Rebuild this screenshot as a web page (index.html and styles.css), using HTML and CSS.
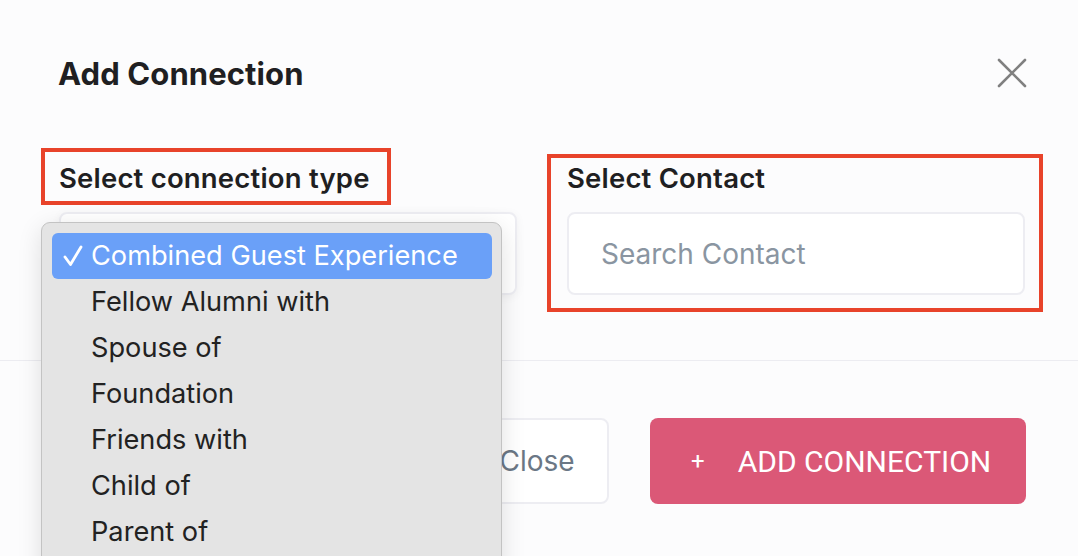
FILE: index.html
```html
<!DOCTYPE html>
<html lang="en">

<head>
	<meta charset="UTF-8">
	<meta name="viewport" content="width=device-width, initial-scale=1.0">
	<title>Add Connection</title>
	<link rel="stylesheet" href="styles.css">
</head>

<body>
	<div class="modal">
		<div class="modal-header">
			<h2 class="modal-title">Add Connection</h2>
			<button class="icon-close" aria-label="Close">
				<svg width="32" height="32" viewBox="0 0 32 32">
					<path d="M3 3 L29 29 M29 3 L3 29" stroke="#808080" stroke-width="2.6" stroke-linecap="round" fill="none"/>
				</svg>
			</button>
		</div>

		<div class="modal-body">
			<div class="field">
				<label class="field-label">Select connection type</label>
				<div class="select-box"></div>
			</div>
			<div class="field">
				<label class="field-label">Select Contact</label>
				<input class="input-box" type="text" placeholder="Search Contact">
			</div>
		</div>

		<div class="modal-footer">
			<button class="btn btn-light">Close</button>
			<button class="btn btn-primary"><span class="plus">+</span>ADD CONNECTION</button>
		</div>
	</div>

	<!-- annotation boxes -->
	<div class="mark mark-type"></div>
	<div class="mark mark-contact"></div>

	<!-- native select popup -->
	<ul class="dropdown">
		<li class="option selected">
			<svg class="check" width="20" height="22" viewBox="0 0 20 22">
				<path d="M2 12 L7.5 19.5 L18 2" stroke="#fff" stroke-width="2.8" stroke-linecap="round" stroke-linejoin="round" fill="none"/>
			</svg>Combined Guest Experience</li>
		<li class="option">Fellow Alumni with</li>
		<li class="option">Spouse of</li>
		<li class="option">Foundation</li>
		<li class="option">Friends with</li>
		<li class="option">Child of</li>
		<li class="option">Parent of</li>
	</ul>
</body>

</html>
```

FILE: styles.css
```css
/* base */
html, body {
	margin: 0;
	padding: 0;
	height: 100%;
	overflow: hidden;
}

body {
	font-family: 'Inter', 'Liberation Sans', sans-serif;
	background: #fcfcfd;
	color: #1f1f22;
	position: relative;
}

.modal {
	width: 100%;
}

/* header */
.modal-header {
	height: 146px;
	display: flex;
	align-items: center;
	justify-content: space-between;
	padding: 0 50px 0 58px;
	box-sizing: border-box;
}

.modal-title {
	margin: 0;
	font-size: 31px;
	font-weight: 700;
	letter-spacing: 0.1px;
}

.icon-close {
	border: none;
	background: none;
	padding: 0;
	width: 32px;
	height: 32px;
	cursor: pointer;
}

/* body */
.modal-body {
	display: flex;
	gap: 50px;
	padding: 16px 53px 65px 59px;
	border-bottom: 1px solid #ececf1;
}

.field {
	flex: 1;
	display: flex;
	flex-direction: column;
}

.field-label {
	height: 32px;
	line-height: 32px;
	font-size: 27.5px;
	font-weight: 600;
	letter-spacing: 0.2px;
	margin-bottom: 18px;
}

.select-box,
.input-box {
	height: 83px;
	box-sizing: border-box;
	border: 2px solid #ededf2;
	border-radius: 8px;
	background: #fff;
}

.select-box {
	box-shadow: 0 2px 10px rgba(0, 0, 0, 0.05);
}

.input-box {
	width: 100%;
	padding: 0 32px;
	font-family: 'Inter', sans-serif;
	font-size: 28px;
	color: #333;
	outline: none;
}

.input-box::placeholder {
	color: #8a95a1;
}

/* footer */
.modal-footer {
	display: flex;
	justify-content: flex-end;
	gap: 41px;
	padding: 57px 52px 0 0;
}

.btn {
	height: 86px;
	border-radius: 8px;
	cursor: pointer;
}

.btn-light {
	width: 166px;
	background: #fff;
	border: 2px solid #ededf2;
	color: #6b7785;
	font-family: 'Inter', sans-serif;
	font-size: 28px;
	padding: 0 0 0 22px;
}

.btn-primary {
	width: 376px;
	border: none;
	background: #db5877;
	color: #fff;
	font-family: 'Roboto', 'Liberation Sans', sans-serif;
	font-size: 30px;
	text-align: left;
	padding: 0 0 0 41px;
	display: flex;
	align-items: center;
}

.plus {
	font-size: 24px;
	margin-right: 33px;
}

/* annotation boxes */
.mark {
	position: absolute;
	border: 4px solid #e8432a;
	box-sizing: border-box;
}

.mark-type {
	left: 41px;
	top: 148px;
	width: 350px;
	height: 57px;
}

.mark-contact {
	left: 547px;
	top: 154px;
	width: 496px;
	height: 158px;
}

/* select popup */
.dropdown {
	position: absolute;
	left: 41px;
	top: 222px;
	width: 461px;
	height: 360px;
	margin: 0;
	padding: 10px 9px 0 10px;
	box-sizing: border-box;
	list-style: none;
	background: #e4e4e4;
	border: 1px solid #c3c3c3;
	border-radius: 9px;
	box-shadow: 0 6px 24px rgba(0, 0, 0, 0.12);
	font-family: 'Inter', 'Noto Sans', sans-serif;
}

.option {
	height: 46px;
	line-height: 46px;
	padding-left: 39px;
	font-size: 27.2px;
	color: #222;
	position: relative;
	border-radius: 6px;
}

.option.selected {
	background: #6aa0f8;
	color: #fff;
}

.check {
	position: absolute;
	left: 11px;
	top: 12px;
}
```
